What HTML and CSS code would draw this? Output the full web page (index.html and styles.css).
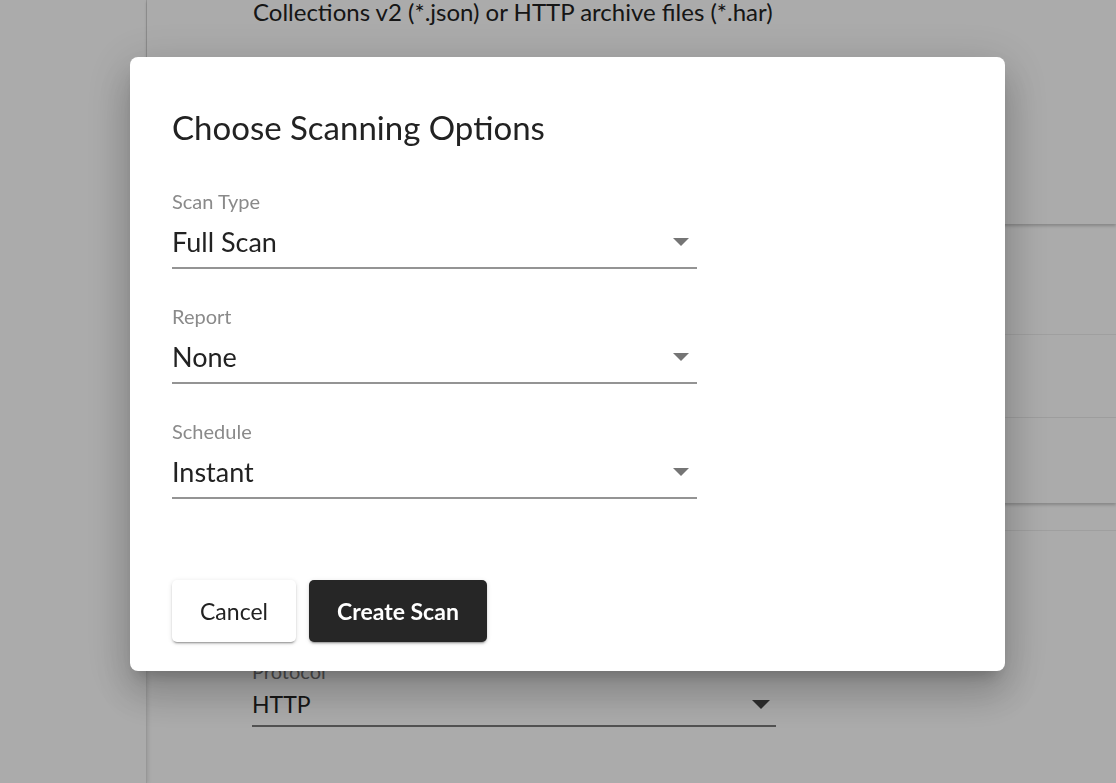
FILE: index.html
```html
<!DOCTYPE html>
<html lang="en">
<head>
<meta charset="utf-8">
<title>Choose Scanning Options</title>
<link rel="stylesheet" href="styles.css">
</head>
<body>
<div class="app">
  <aside class="sidebar"></aside>
  <main class="main">
    <section class="block block-intro">
      <p class="intro">Collections v2 (*.json) or HTTP archive files (*.har)</p>
    </section>
    <div class="block block-a"></div>
    <div class="block block-b"></div>
    <div class="block block-c"></div>
    <div class="block block-d"></div>
    <section class="block block-form">
      <div class="bg-field">
        <div class="bg-label">Protocol</div>
        <div class="bg-select">
          <span>HTTP</span>
          <svg class="bg-arrow" width="18" height="9" viewBox="0 0 18 9"><path d="M0 0h18L9 9z"/></svg>
        </div>
      </div>
    </section>
  </main>
</div>

<div class="backdrop"></div>

<div class="dialog" role="dialog">
  <h2 class="dialog-title">Choose Scanning Options</h2>
  <div class="fields">
    <div class="field">
      <div class="field-label">Scan Type</div>
      <div class="select">
        <span class="select-value">Full Scan</span>
        <svg class="arrow" width="16" height="8" viewBox="0 0 16 8"><path d="M0 0h16L8 8z"/></svg>
      </div>
    </div>
    <div class="field">
      <div class="field-label">Report</div>
      <div class="select">
        <span class="select-value">None</span>
        <svg class="arrow" width="16" height="8" viewBox="0 0 16 8"><path d="M0 0h16L8 8z"/></svg>
      </div>
    </div>
    <div class="field">
      <div class="field-label">Schedule</div>
      <div class="select">
        <span class="select-value">Instant</span>
        <svg class="arrow" width="16" height="8" viewBox="0 0 16 8"><path d="M0 0h16L8 8z"/></svg>
      </div>
    </div>
  </div>
  <div class="actions">
    <button class="btn btn-cancel">Cancel</button>
    <button class="btn btn-primary">Create Scan</button>
  </div>
</div>
</body>
</html>
```
FILE: styles.css
```css
* { box-sizing: border-box; }

html, body {
  margin: 0;
  padding: 0;
  height: 100%;
  overflow: hidden;
}

body {
  font-family: "Lato", "Open Sans", "Liberation Sans", sans-serif;
  background: #ffffff;
  color: #222222;
}

.app {
  display: flex;
  height: 100%;
}

.sidebar {
  width: 147px;
  flex: none;
  background: #ffffff;
  border-right: 1px solid #e2e2e2;
  box-shadow: 1px 0 4px rgba(0, 0, 0, 0.12);
  position: relative;
  z-index: 1;
}

.main {
  flex: 1;
  display: flex;
  flex-direction: column;
  background: #ffffff;
}

.block {
  position: relative;
  background: #ffffff;
}

.block-intro {
  height: 224px;
  padding-left: 106px;
  box-shadow: 0 2px 3px rgba(0, 0, 0, 0.22);
  z-index: 3;
}

.intro {
  margin: 0;
  font-size: 24px;
  line-height: 24px;
  color: #222;
}

.block-a {
  height: 111px;
  border-bottom: 1px solid #ededed;
}

.block-b {
  height: 83px;
  border-bottom: 1px solid #ededed;
}

.block-c {
  height: 85px;
  box-shadow: 0 2px 3px rgba(0, 0, 0, 0.22);
  z-index: 2;
}

.block-d {
  height: 28px;
  border-bottom: 1px solid #ededed;
}

.block-form {
  flex: 1;
  padding: 128px 0 0 105px;
}

.bg-field {
  width: 524px;
}

.bg-label {
  font-size: 20px;
  line-height: 24px;
  color: #7a7a7a;
}

.bg-select {
  display: flex;
  align-items: center;
  justify-content: space-between;
  height: 44px;
  padding: 0 6px 0 0;
  font-size: 23px;
  color: #222;
  border-bottom: 2px solid #7a7a7a;
}

.bg-arrow path { fill: #444; }

.backdrop {
  position: fixed;
  inset: 0;
  background: rgba(0, 0, 0, 0.33);
  z-index: 10;
}

.dialog {
  position: fixed;
  left: 130px;
  top: 57px;
  width: 875px;
  height: 614px;
  z-index: 11;
  background: #ffffff;
  border-radius: 8px;
  padding: 50px 42px 29px;
  display: flex;
  flex-direction: column;
  box-shadow: 0 11px 15px -7px rgba(0, 0, 0, 0.2),
              0 24px 38px 3px rgba(0, 0, 0, 0.14),
              0 9px 46px 8px rgba(0, 0, 0, 0.12);
}

.dialog-title {
  margin: 0;
  font-size: 33px;
  line-height: 40px;
  font-weight: 400;
  color: #222;
}

.fields {
  display: flex;
  flex-direction: column;
  gap: 35px;
  margin-top: 42px;
  width: 525px;
}

.field-label {
  font-size: 20px;
  line-height: 24px;
  color: #8a8a8a;
  margin-bottom: 13px;
}

.select {
  display: flex;
  align-items: center;
  justify-content: space-between;
  height: 43px;
  padding: 0 8px 9px 0;
  border-bottom: 2px solid #949494;
}

.select-value {
  font-size: 27px;
  line-height: 32px;
  color: #222;
}

.arrow path { fill: #757575; }

.actions {
  margin-top: auto;
  display: flex;
  gap: 13px;
}

.btn {
  height: 62px;
  padding: 0 28px;
  border: none;
  border-radius: 5px;
  font-family: inherit;
  font-size: 23px;
  cursor: pointer;
}

.btn-cancel {
  background: #ffffff;
  color: #222;
  box-shadow: 0 3px 1px -2px rgba(0, 0, 0, 0.2),
              0 2px 2px 0 rgba(0, 0, 0, 0.14),
              0 1px 5px 0 rgba(0, 0, 0, 0.12);
}

.btn-primary {
  background: #262626;
  color: #ffffff;
  font-weight: 700;
  box-shadow: 0 3px 1px -2px rgba(0, 0, 0, 0.2),
              0 2px 2px 0 rgba(0, 0, 0, 0.14),
              0 1px 5px 0 rgba(0, 0, 0, 0.12);
}
```
